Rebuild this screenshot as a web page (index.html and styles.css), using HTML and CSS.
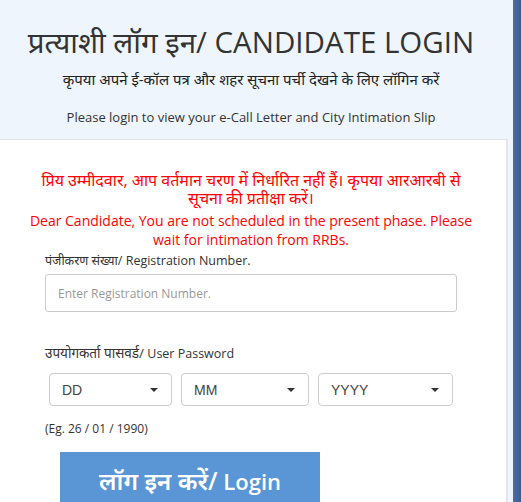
FILE: index.html
```html
<!DOCTYPE html>
<html lang="hi">
<head>
<meta charset="utf-8">
<title>Candidate Login</title>
<link rel="stylesheet" href="styles.css">
</head>
<body>
<div class="layout">
  <div class="main">
    <header class="header">
      <h1 class="title">प्रत्याशी लॉग इन/ CANDIDATE LOGIN</h1>
      <p class="sub-hi">कृपया अपने ई-कॉल पत्र और शहर सूचना पर्ची देखने के लिए लॉगिन करें</p>
      <p class="sub-en">Please login to view your e-Call Letter and City Intimation Slip</p>
    </header>
    <section class="panel">
      <div class="panel-inner">
        <div class="notice">
          <p class="notice-hi">प्रिय उम्मीदवार, आप वर्तमान चरण में निर्धारित नहीं हैं। कृपया आरआरबी से सूचना की प्रतीक्षा करें।</p>
          <p>Dear Candidate, You are not scheduled in the present phase. Please wait for intimation from RRBs.</p>
        </div>
        <form class="form">
          <label class="label">पंजीकरण संख्या/ Registration Number.</label>
          <input class="input" type="text" placeholder="Enter Registration Number.">
          <label class="label label-pw"><span class="hi-pw">उपयोगकर्ता पासवर्ड/</span> User Password</label>
          <div class="dob">
            <div class="select sel-dd"><span>DD</span><i class="caret"></i></div>
            <div class="select sel-mm"><span>MM</span><i class="caret"></i></div>
            <div class="select sel-yy"><span>YYYY</span><i class="caret"></i></div>
          </div>
          <p class="eg">(Eg. 26 / 01 / 1990)</p>
          <button class="btn" type="button"><span class="hi-btn">लॉग इन करें/</span> Login</button>
        </form>
      </div>
    </section>
  </div>
  <div class="strip"></div>
</div>
</body>
</html>
```

FILE: styles.css
```css
html, body {
  margin: 0;
  padding: 0;
}
body {
  background: #eef5fd;
  font-family: "Open Sans", "Noto Sans", sans-serif;
  color: #333;
  overflow: hidden;
}
.layout {
  display: flex;
  width: 521px;
  height: 502px;
}
.main {
  width: 513px;
  flex: 0 0 513px;
  display: flex;
  flex-direction: column;
}
.strip {
  flex: 0 0 8px;
  background: linear-gradient(to right, #4b6ea5, #3a5b8e);
}
.header {
  flex: 0 0 139px;
  width: 502px;
  height: 139px;
  box-sizing: border-box;
  padding-top: 24px;
  text-align: center;
}
.title {
  margin: 0;
  font-size: 29.5px;
  line-height: 36px;
  font-weight: 400;
  color: #333;
}
.sub-hi {
  margin: 9px 0 0;
  font-size: 15px;
  line-height: 20px;
  color: #222;
}
.sub-en {
  margin: 18px 0 0;
  font-size: 13px;
  line-height: 20px;
  color: #333;
}
.panel {
  flex: 1 1 auto;
  min-height: 0;
  width: 508px;
  box-sizing: border-box;
  background: #fff;
  border-top: 1px solid #dde3ea;
  border-right: 2px solid #e3e6ea;
  overflow: hidden;
}
.panel-inner {
  width: 502px;
  padding-top: 31px;
}
.notice {
  text-align: center;
  color: #f00;
  font-size: 14px;
  line-height: 19px;
  padding: 0 28px;
}
.notice p {
  margin: 0;
}
.notice-hi {
  font-size: 16px;
  line-height: 18px;
  margin-bottom: 4px !important;
}
.form {
  width: 412px;
  margin: 3px auto 0;
  display: flex;
  flex-direction: column;
}
.label {
  font-size: 12.5px;
  line-height: 17px;
  color: #333;
}
.hi-pw {
  font-size: 13.5px;
}
.input {
  margin-top: 5px;
  height: 38px;
  box-sizing: border-box;
  border: 1px solid #ccc;
  border-radius: 3px;
  padding: 0 12px;
  font-family: "Open Sans", "Noto Sans", sans-serif;
  font-size: 12px;
  color: #555;
  background: #fff;
}
.input::placeholder {
  color: #999;
}
.label-pw {
  margin-top: 33px;
}
.dob {
  margin: 11px 4px 0;
  display: flex;
  gap: 9px;
}
.select {
  height: 33px;
  box-sizing: border-box;
  border: 1px solid #ccc;
  border-radius: 4px;
  display: flex;
  align-items: center;
  justify-content: space-between;
  padding: 0 13px 0 12px;
  font-family: "Liberation Sans", Arial, sans-serif;
  font-size: 14px;
  color: #444;
}
.sel-dd { width: 123px; }
.sel-mm { width: 128px; }
.sel-yy { width: 135px; }
.caret {
  width: 0;
  height: 0;
  border-left: 4px solid transparent;
  border-right: 4px solid transparent;
  border-top: 4px solid #333;
}
.eg {
  margin: 14px 0 0;
  font-size: 12px;
  line-height: 17px;
  color: #333;
}
.btn {
  margin: 15px 0 0 15px;
  width: 260px;
  height: 62px;
  flex: 0 0 62px;
  border: 0;
  background: #5a95d6;
  color: #fff;
  font-family: "Open Sans", "Noto Sans", sans-serif;
  font-size: 22px;
  font-weight: 600;
  text-align: center;
  padding: 0 0 6px;
}
.hi-btn {
  font-size: 24.5px;
}
```
